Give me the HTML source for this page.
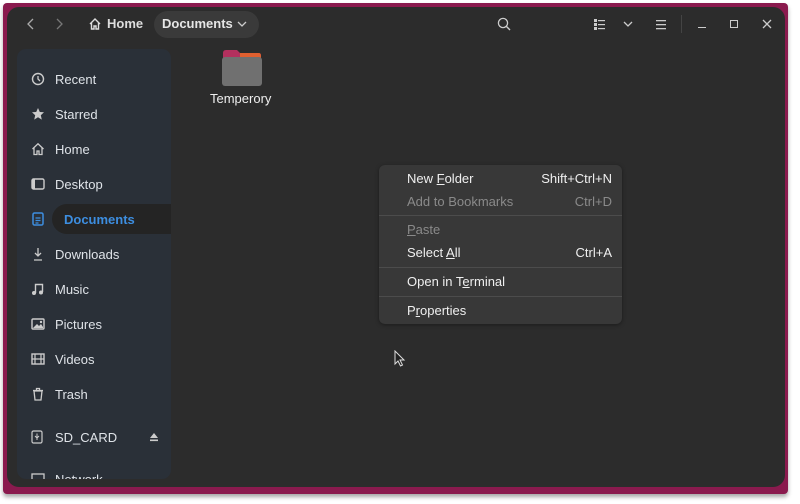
<!DOCTYPE html>
<html><head><style>
*{margin:0;padding:0;box-sizing:border-box}
body{width:800px;height:504px;background:#fff;position:relative;overflow:hidden;font-family:"Liberation Sans","DejaVu Sans",sans-serif;font-size:13px;color:#e8e8e8}
.frame{position:absolute;left:3px;top:3px;width:785px;height:491px;background:#8a1a4e;border-radius:4px;box-shadow:0 3px 4px rgba(0,0,0,.35)}
.win{position:absolute;left:7px;top:7px;width:778px;height:480px;background:#2c2c2c;border-radius:12px;overflow:hidden}
.side{position:absolute;left:10px;top:42px;width:154px;height:430px;background:#2a3038;border-radius:9px;overflow:hidden}
.item{position:absolute;left:0;height:30px;width:154px;display:flex;align-items:center}
.item svg{position:absolute;left:14px}
.item span{position:absolute;left:38px;color:#dfe3e8}
.docs{position:absolute;left:35px;top:155px;width:119px;height:30px;background:#242424;border-radius:15px 0 0 15px}
.menu{position:absolute;left:372px;top:158px;width:243px;height:159px;background:#383838;border-radius:6px;box-shadow:0 1px 4px rgba(0,0,0,.4)}
.mi{position:absolute;left:28px;right:10px;display:flex;justify-content:space-between;color:#efefef}
.dis{color:#8a8a8a}
.sep{position:absolute;left:0;right:0;height:1px;background:#4c4c4c}
u{text-decoration:underline}
</style></head><body>
<div class="frame"></div>
<div class="win">
 <svg style="position:absolute;left:17px;top:10px" width="14" height="14"><path d="M9 2 L4 7 L9 12" stroke="#aaa" fill="none" stroke-width="1.3"/></svg>
 <svg style="position:absolute;left:45px;top:10px" width="14" height="14"><path d="M5 2 L10 7 L5 12" stroke="#777" fill="none" stroke-width="1.3"/></svg>
 <svg style="position:absolute;left:81px;top:10px" width="14" height="14"><path d="M2 7 L7 2 L12 7 M3.5 6 V12 H6 V9 H8 V12 H10.5 V6" stroke="#ddd" fill="none" stroke-width="1.4"/></svg>
 <div style="position:absolute;left:100px;top:9px;font-weight:bold;color:#ddd">Home</div>
 <div style="position:absolute;left:147px;top:4px;width:105px;height:27px;background:#3a3a3a;border-radius:14px"></div>
 <div style="position:absolute;left:155px;top:9px;font-weight:bold;color:#e6e6e6">Documents</div>
 <svg style="position:absolute;left:230px;top:13px" width="10" height="8"><path d="M1 2 L5 6 L9 2" stroke="#ccc" fill="none" stroke-width="1.3"/></svg>
 <svg style="position:absolute;left:490px;top:10px" width="14" height="14"><circle cx="6" cy="6" r="4.6" stroke="#ccc" fill="none" stroke-width="1.3"/><path d="M9.5 9.5 L13 13" stroke="#ccc" stroke-width="1.4"/></svg>
 <svg style="position:absolute;left:587px;top:11px" width="12" height="12"><g fill="#ccc"><rect x="0" y="1" width="3" height="3"/><rect x="0" y="5" width="3" height="3"/><rect x="0" y="9" width="3" height="3"/><rect x="4" y="2" width="7" height="1.2"/><rect x="4" y="6" width="7" height="1.2"/><rect x="4" y="10" width="7" height="1.2"/></g></svg>
 <svg style="position:absolute;left:616px;top:13px" width="10" height="8"><path d="M1 2 L5 6 L9 2" stroke="#ccc" fill="none" stroke-width="1.3"/></svg>
 <svg style="position:absolute;left:648px;top:11px" width="12" height="12"><g fill="#ccc"><rect x="1" y="2" width="10" height="1.3"/><rect x="1" y="6" width="10" height="1.3"/><rect x="1" y="10" width="10" height="1.3"/></g></svg>
 <div style="position:absolute;left:674px;top:8px;width:1px;height:18px;background:#444"></div>
 <div style="position:absolute;left:691px;top:20px;width:8px;height:1.3px;background:#ccc"></div>
 <div style="position:absolute;left:723px;top:13px;width:8px;height:8px;border:1.3px solid #ccc"></div>
 <svg style="position:absolute;left:755px;top:12px" width="10" height="10"><path d="M1 1 L9 9 M9 1 L1 9" stroke="#ccc" stroke-width="1.3"/></svg>

 <div class="side">
  <div class="item" style="top:15px"><svg width="14" height="14"><circle cx="7" cy="7" r="5.5" stroke="#ccc" fill="none" stroke-width="1.4"/><path d="M7 4 V7 L9 9" stroke="#ccc" fill="none" stroke-width="1.3"/></svg><span>Recent</span></div>
  <div class="item" style="top:50px"><svg width="14" height="14"><path d="M7 1 L8.8 5 L13 5.3 L9.8 8.2 L10.8 12.6 L7 10.3 L3.2 12.6 L4.2 8.2 L1 5.3 L5.2 5 Z" fill="#ccc"/></svg><span>Starred</span></div>
  <div class="item" style="top:85px"><svg width="14" height="14"><path d="M1.5 7 L7 1.8 L12.5 7 M3 5.8 V12.5 H6 V9 H8 V12.5 H11 V5.8" stroke="#ccc" fill="none" stroke-width="1.3"/></svg><span>Home</span></div>
  <div class="item" style="top:120px"><svg width="14" height="14"><rect x="1" y="2" width="12" height="10" rx="1.5" stroke="#ccc" fill="none" stroke-width="1.4"/><rect x="1" y="2" width="3" height="10" fill="#ccc"/></svg><span>Desktop</span></div>
  <div class="docs"></div>
  <div class="item" style="top:155px"><svg width="14" height="14"><rect x="2" y="1" width="10" height="12" rx="1.5" stroke="#3d8ee0" fill="none" stroke-width="1.5"/><path d="M4.5 6 H9.5 M4.5 8.5 H9.5 M4.5 11 H7.5" stroke="#3d8ee0" stroke-width="1.2"/></svg><span style="left:47px;color:#3d8ee0;font-weight:bold">Documents</span></div>
  <div class="item" style="top:190px"><svg width="14" height="14"><path d="M7 1 V9 M4 6 L7 9 L10 6 M3 13 H11" stroke="#ccc" fill="none" stroke-width="1.3"/></svg><span>Downloads</span></div>
  <div class="item" style="top:225px"><svg width="14" height="14"><path d="M4.5 11 V2.5 H11.5 V10" stroke="#ccc" fill="none" stroke-width="1.4"/><circle cx="3" cy="11" r="2" fill="#ccc"/><circle cx="10" cy="10.5" r="2" fill="#ccc"/></svg><span>Music</span></div>
  <div class="item" style="top:260px"><svg width="14" height="14"><rect x="1" y="2" width="12" height="10" rx="1" stroke="#ccc" fill="none" stroke-width="1.4"/><path d="M2 11 L6 7 L8 9 L10 7 L12 10 V11 Z" fill="#ccc"/><circle cx="10" cy="5" r="1.2" fill="#ccc"/></svg><span>Pictures</span></div>
  <div class="item" style="top:295px"><svg width="14" height="14"><rect x="1" y="2" width="12" height="10" stroke="#ccc" fill="none" stroke-width="1.4"/><path d="M4 2 V12 M10 2 V12 M1 7 H13" stroke="#ccc" stroke-width="1.2"/></svg><span>Videos</span></div>
  <div class="item" style="top:330px"><svg width="14" height="14"><path d="M3 4 H11 L10 13 H4 Z M2 3.5 H12 M5.5 3 V1.5 H8.5 V3" stroke="#ccc" fill="none" stroke-width="1.3"/></svg><span>Trash</span></div>
  <div class="item" style="top:373px"><svg width="12" height="14"><rect x="1" y="1" width="10" height="12" rx="1.5" stroke="#ccc" fill="none" stroke-width="1.2"/><path d="M6 3.5 V10 M4 6 L6 8 L8 6" stroke="#ccc" fill="none" stroke-width="1"/></svg><span>SD_CARD</span>
   <svg style="left:132px" width="10" height="10"><path d="M1 6 L5 1 L9 6 Z" fill="#ccc"/><rect x="1" y="7.5" width="8" height="1.6" fill="#ccc"/></svg></div>
  <div class="item" style="top:415px"><svg width="14" height="14"><rect x="1" y="2" width="12" height="10" stroke="#ccc" fill="none" stroke-width="1.3"/></svg><span>Network</span></div>
 </div>

 <svg style="position:absolute;left:214px;top:42px" width="42" height="38"><path d="M2 4 Q2 1 5 1 H16 L19 4 H38 Q40 4 40 7 V12 H2 Z" fill="#b3305e"/><path d="M19 4 H38 Q40 4 40 7 V10 H19 Z" fill="#e06030"/><rect x="1" y="8" width="40" height="29" rx="3" fill="#707070"/></svg>
 <div style="position:absolute;left:203px;top:84px;color:#eee">Temperory</div>

 <div class="menu">
  <div class="mi" style="top:6px"><span>New <u>F</u>older</span><span>Shift+Ctrl+N</span></div>
  <div class="mi dis" style="top:29px"><span>Add to Bookmarks</span><span>Ctrl+D</span></div>
  <div class="sep" style="top:50px"></div>
  <div class="mi dis" style="top:57px"><span><u>P</u>aste</span></div>
  <div class="mi" style="top:80px"><span>Select <u>A</u>ll</span><span>Ctrl+A</span></div>
  <div class="sep" style="top:102px"></div>
  <div class="mi" style="top:109px"><span>Open in T<u>e</u>rminal</span></div>
  <div class="sep" style="top:131px"></div>
  <div class="mi" style="top:138px"><span>P<u>r</u>operties</span></div>
 </div>
 <svg style="position:absolute;left:387px;top:343px" width="12" height="18"><path d="M1 1 V14 L4 11 L6.5 16 L8.5 15 L6 10 H10 Z" fill="#222" stroke="#ddd" stroke-width="1"/></svg>
</div>
</body></html>
